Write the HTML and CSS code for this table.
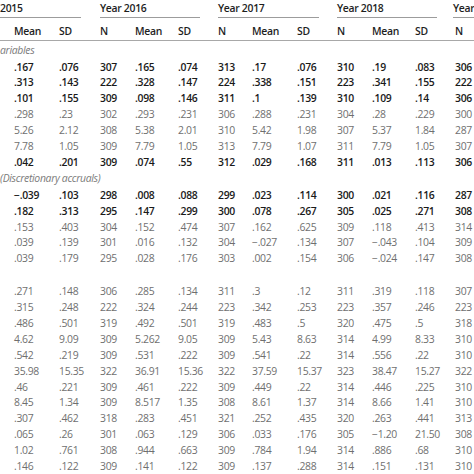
FILE: index.html
```html
<!DOCTYPE html>
<html>
<head>
<meta charset="utf-8">
<link rel="stylesheet" href="styles.css">
</head>
<body>
<div class="table">
  <div class="row years">
    <div class="yr g1">2015</div>
    <div class="yr g2">Year 2016</div>
    <div class="yr g3">Year 2017</div>
    <div class="yr g4">Year 2018</div>
    <div class="yr g5">Year 2019</div>
  </div>
  <div class="row head">
    <div></div><div>Mean</div><div>SD</div>
    <div>N</div><div>Mean</div><div>SD</div>
    <div>N</div><div>Mean</div><div>SD</div>
    <div>N</div><div>Mean</div><div>SD</div>
    <div>N</div>
  </div>
  <div class="section">ariables</div>
  <div class="row data bold"><div></div><div>.167</div><div>.076</div><div>307</div><div>.165</div><div>.074</div><div>313</div><div>.17</div><div>.076</div><div>310</div><div>.19</div><div>.083</div><div>306</div></div>
  <div class="row data bold"><div></div><div>.313</div><div>.143</div><div>222</div><div>.328</div><div>.147</div><div>224</div><div>.338</div><div>.151</div><div>223</div><div>.341</div><div>.155</div><div>222</div></div>
  <div class="row data bold"><div></div><div>.101</div><div>.155</div><div>309</div><div>.098</div><div>.146</div><div>311</div><div>.1</div><div>.139</div><div>310</div><div>.109</div><div>.14</div><div>306</div></div>
  <div class="row data"><div></div><div>.298</div><div>.23</div><div>302</div><div>.293</div><div>.231</div><div>306</div><div>.288</div><div>.231</div><div>304</div><div>.28</div><div>.229</div><div>300</div></div>
  <div class="row data"><div></div><div>5.26</div><div>2.12</div><div>308</div><div>5.38</div><div>2.01</div><div>310</div><div>5.42</div><div>1.98</div><div>307</div><div>5.37</div><div>1.84</div><div>287</div></div>
  <div class="row data"><div></div><div>7.78</div><div>1.05</div><div>309</div><div>7.79</div><div>1.05</div><div>313</div><div>7.79</div><div>1.07</div><div>311</div><div>7.79</div><div>1.05</div><div>307</div></div>
  <div class="row data bold"><div></div><div>.042</div><div>.201</div><div>309</div><div>.074</div><div>.55</div><div>312</div><div>.029</div><div>.168</div><div>311</div><div>.013</div><div>.113</div><div>306</div></div>
  <div class="section">(Discretionary accruals)</div>
  <div class="row data bold"><div></div><div>−.039</div><div>.103</div><div>298</div><div>.008</div><div>.088</div><div>299</div><div>.023</div><div>.114</div><div>300</div><div>.021</div><div>.116</div><div>287</div></div>
  <div class="row data bold"><div></div><div>.182</div><div>.313</div><div>295</div><div>.147</div><div>.299</div><div>300</div><div>.078</div><div>.267</div><div>305</div><div>.025</div><div>.271</div><div>308</div></div>
  <div class="row data"><div></div><div>.153</div><div>.403</div><div>304</div><div>.152</div><div>.474</div><div>307</div><div>.162</div><div>.625</div><div>309</div><div>.118</div><div>.413</div><div>314</div></div>
  <div class="row data"><div></div><div>.039</div><div>.139</div><div>301</div><div>.016</div><div>.132</div><div>304</div><div>−.027</div><div>.134</div><div>307</div><div>−.043</div><div>.104</div><div>309</div></div>
  <div class="row data"><div></div><div>.039</div><div>.179</div><div>295</div><div>.028</div><div>.176</div><div>303</div><div>.002</div><div>.154</div><div>306</div><div>−.024</div><div>.147</div><div>308</div></div>
  <div class="section"></div>
  <div class="row data"><div></div><div>.271</div><div>.148</div><div>306</div><div>.285</div><div>.134</div><div>311</div><div>.3</div><div>.12</div><div>311</div><div>.319</div><div>.118</div><div>307</div></div>
  <div class="row data"><div></div><div>.315</div><div>.248</div><div>222</div><div>.324</div><div>.244</div><div>223</div><div>.342</div><div>.253</div><div>223</div><div>.357</div><div>.246</div><div>223</div></div>
  <div class="row data"><div></div><div>.486</div><div>.501</div><div>319</div><div>.492</div><div>.501</div><div>319</div><div>.483</div><div>.5</div><div>320</div><div>.475</div><div>.5</div><div>318</div></div>
  <div class="row data"><div></div><div>4.62</div><div>9.09</div><div>309</div><div>5.262</div><div>9.05</div><div>309</div><div>5.43</div><div>8.63</div><div>314</div><div>4.99</div><div>8.33</div><div>310</div></div>
  <div class="row data"><div></div><div>.542</div><div>.219</div><div>309</div><div>.531</div><div>.222</div><div>309</div><div>.541</div><div>.22</div><div>314</div><div>.556</div><div>.22</div><div>310</div></div>
  <div class="row data"><div></div><div>35.98</div><div>15.35</div><div>322</div><div>36.91</div><div>15.36</div><div>322</div><div>37.59</div><div>15.37</div><div>323</div><div>38.47</div><div>15.27</div><div>322</div></div>
  <div class="row data"><div></div><div>.46</div><div>.221</div><div>309</div><div>.461</div><div>.222</div><div>309</div><div>.449</div><div>.22</div><div>314</div><div>.446</div><div>.225</div><div>310</div></div>
  <div class="row data"><div></div><div>8.45</div><div>1.34</div><div>309</div><div>8.517</div><div>1.35</div><div>308</div><div>8.61</div><div>1.37</div><div>314</div><div>8.66</div><div>1.41</div><div>310</div></div>
  <div class="row data"><div></div><div>.307</div><div>.462</div><div>318</div><div>.283</div><div>.451</div><div>321</div><div>.252</div><div>.435</div><div>320</div><div>.263</div><div>.441</div><div>313</div></div>
  <div class="row data"><div></div><div>.065</div><div>.26</div><div>301</div><div>.063</div><div>.129</div><div>306</div><div>.033</div><div>.176</div><div>305</div><div>−1.20</div><div>21.50</div><div>308</div></div>
  <div class="row data"><div></div><div>1.02</div><div>.761</div><div>308</div><div>.944</div><div>.663</div><div>309</div><div>.784</div><div>1.94</div><div>314</div><div>.886</div><div>.68</div><div>310</div></div>
  <div class="row data"><div></div><div>.146</div><div>.122</div><div>309</div><div>.141</div><div>.122</div><div>309</div><div>.137</div><div>.288</div><div>314</div><div>.151</div><div>.131</div><div>310</div></div>
</div>
</body>
</html>
```

FILE: styles.css
```css
html, body {
  margin: 0;
  padding: 0;
  background: #ffffff;
}
body {
  width: 474px;
  height: 474px;
  overflow: hidden;
  font-family: "Open Sans", "Noto Sans", sans-serif;
  font-size: 10.4px;
  letter-spacing: -0.3px;
  color: #6f6f6f;
}
.table {
  width: 474px;
}
.row {
  display: grid;
  grid-template-columns: 14px 45px 41px 35px 43px 40px 34px 45px 40px 35px 43px 40px minmax(0, 1fr);
  white-space: nowrap;
}
.row > div {
  min-width: 0;
}
.years {
  height: 18px;
}
.yr {
  font-weight: 600;
  color: #1e1e1e;
  line-height: 17px;
  border-bottom: 1px solid #9c9c9c;
  margin-right: 18px;
}
.g1 { grid-column: 1 / 4; margin-right: 19px; }
.g2 { grid-column: 4 / 7; }
.g3 { grid-column: 7 / 10; }
.g4 { grid-column: 10 / 13; }
.g5 { grid-column: 13 / 14; margin-right: 0; margin-left: -2px; }
.head {
  height: 22px;
  box-sizing: content-box;
  border-bottom: 1px solid #a8a8a8;
  font-weight: 600;
  color: #1e1e1e;
}
.head > div {
  line-height: 22px;
  padding-top: 1.5px;
}
.section {
  height: 17px;
  box-sizing: border-box;
  padding-top: 2px;
  line-height: 15px;
  font-style: italic;
  color: #7a7a7a;
  white-space: nowrap;
}
.data {
  height: 15.9px;
}
.data > div {
  line-height: 15.9px;
  padding-top: 1.5px;
}
.bold {
  font-weight: 600;
  color: #1a1a1a;
}
```
